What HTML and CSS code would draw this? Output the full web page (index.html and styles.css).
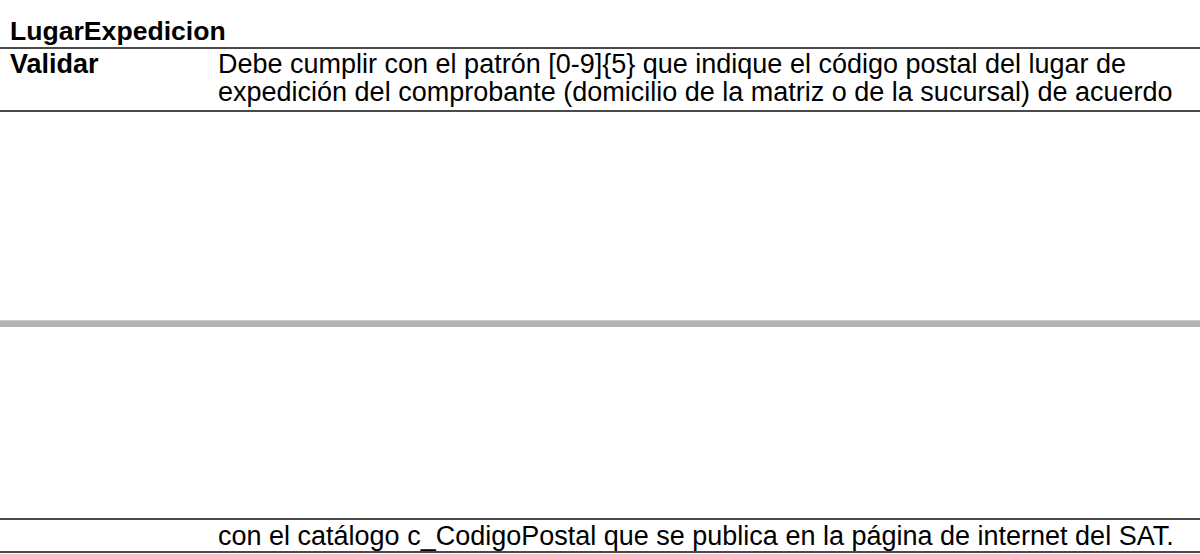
FILE: index.html
```html
<!DOCTYPE html>
<html lang="es">

<head>
  <meta charset="UTF-8" />
  <title>LugarExpedicion</title>
  <link rel="stylesheet" href="styles.css">
</head>

<body>
  <div class="title">LugarExpedicion</div>

  <div class="row first">
    <div class="label">Validar</div>
    <div class="desc">
      Debe cumplir con el patrón [0-9]{5} que indique el código postal del lugar de<br>
      expedición del comprobante (domicilio de la matriz o de la sucursal) de acuerdo
    </div>
  </div>

  <div class="page-gap">
    <div class="page-break"></div>
  </div>

  <div class="row second">
    <div class="label"></div>
    <div class="desc">con el catálogo c_CodigoPostal que se publica en la página de internet del SAT.</div>
  </div>
</body>

</html>
```

FILE: styles.css
```css
* {
  box-sizing: border-box;
}

body {
  margin: 0;
  background: #ffffff;
  color: #000000;
  font-family: 'Liberation Sans', Arial, sans-serif;
  font-size: 27px;
  line-height: 28px;
}

.title {
  font-size: 26.6px;
  font-weight: bold;
  padding: 17px 0 2px 10px;
}

.row {
  display: grid;
  grid-template-columns: 202px 1fr;
  border-top: 2px solid #4a4a4a;
  border-bottom: 2px solid #4a4a4a;
}

.row.first {
  padding: 1px 0 4px;
}

.row.second {
  padding: 2px 0 1px;
}

.label {
  font-weight: bold;
  padding-left: 10px;
}

.desc {
  padding-left: 16px;
  white-space: nowrap;
}

.page-gap {
  height: 406px;
  padding-top: 208px;
}

.page-break {
  height: 7px;
  background: #b4b4b4;
  border-top: 1px solid #c8c8c8;
}
```
